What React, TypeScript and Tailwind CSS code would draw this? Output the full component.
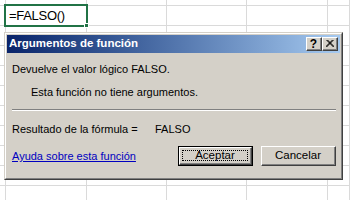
import React from "react";

const cols = ["w-[6px]", "w-[81px]", "w-[80px]", "w-[80px]", "w-[81px]", "flex-1"];

function Sheet() {
  const rows = Array.from({ length: 11 });
  return (
    <div className="flex flex-col w-[350px]">
      {rows.map((_, r) => (
        <div key={r} className={`flex ${r === 0 ? "h-[6px]" : "h-[20px]"}`}>
          {cols.map((c, i) => (
            <div key={i} className={`${c} h-full border-r border-b border-[#dadada]`} />
          ))}
        </div>
      ))}
    </div>
  );
}

function ClassicBtn({ children, def }: { children: React.ReactNode; def?: boolean }) {
  if (def) {
    return (
      <div className="w-[75px] h-[20px] border border-black">
        <div className="w-full h-full border-t border-l border-white border-r border-b border-r-[#404040] border-b-[#404040]">
          <div className="w-full h-full border-r border-b border-[#808080] flex items-center justify-center p-[2px]">
            <div className="w-full h-full border border-dotted border-black flex items-center justify-center text-[11.5px] leading-none text-black">
              {children}
            </div>
          </div>
        </div>
      </div>
    );
  }
  return (
    <div className="w-[75px] h-[20px] border-t border-l border-white border-r border-b border-r-[#404040] border-b-[#404040]">
      <div className="w-full h-full border-r border-b border-[#808080] flex items-center justify-center text-[11.5px] leading-none text-black">
        {children}
      </div>
    </div>
  );
}

function TitleBtn({ children }: { children: React.ReactNode }) {
  return (
    <div className="w-[16px] h-[14px] bg-[#d4d0c8] border-t border-l border-white border-r border-b border-r-[#404040] border-b-[#404040]">
      <div className="w-full h-full border-r border-b border-[#808080] flex items-center justify-center">
        {children}
      </div>
    </div>
  );
}

export default function App() {
  return (
    <div
      className="relative w-[350px] h-[200px] overflow-hidden bg-white"
      style={{ fontFamily: '"Liberation Sans", Arial, sans-serif' }}
    >
      <Sheet />

      {/* selected cell */}
      <div className="absolute left-[4px] top-[4px] w-[84px] h-[23px] border-2 border-[#217346] bg-white flex items-center pl-[3px]">
        <span className="text-[13px] leading-none text-black tracking-[-0.3px]">=FALSO()</span>
      </div>
      <div className="absolute left-[84px] top-[23px] w-[5px] h-[5px] bg-[#217346] border border-white" />

      {/* dialog */}
      <div className="absolute left-[4px] top-[32px] w-[339px] h-[148px] bg-[#d4d0c8] border-t border-l border-[#d4d0c8] border-r border-b border-r-[#404040] border-b-[#404040]">
        <div className="w-full h-full border-t border-l border-white border-r border-b border-r-[#808080] border-b-[#808080] p-[1px] flex flex-col">
          <div className="h-[18px] flex items-center justify-between pl-[2px] pr-[2px] bg-gradient-to-r from-[#0a246a] to-[#a6caf0]">
            <span className="text-white font-bold text-[11.5px] leading-none">Argumentos de función</span>
            <div className="flex">
              <TitleBtn>
                <span className="font-bold text-[12px] leading-none text-black">?</span>
              </TitleBtn>
              <TitleBtn>
                <svg width="8" height="7" viewBox="0 0 8 7">
                  <path d="M0.5 0 L7.5 7 M1.5 0 L8.5 7 M7.5 0 L0.5 7 M6.5 0 L-0.5 7" stroke="black" strokeWidth="1" />
                </svg>
              </TitleBtn>
            </div>
          </div>

          <div className="flex flex-col pl-[5px] pr-[4px] text-[11px] text-black">
            <div className="mt-[9px] leading-[14px]">Devuelve el valor lógico FALSO.</div>
            <div className="mt-[9px] leading-[14px] ml-[19px]">Esta función no tiene argumentos.</div>
            <div className="mt-[10px] h-[2px] border-t border-[#808080] border-b border-b-white" />
            <div className="mt-[11px] leading-[14px] flex">
              <span className="w-[143px]">Resultado de la fórmula =</span>
              <span>FALSO</span>
            </div>
            <div className="mt-[10px] flex items-center">
              <span className="flex-1 text-[#0000c0] underline leading-[14px]">Ayuda sobre esta función</span>
              <div className="flex gap-[8px]">
                <ClassicBtn def>Aceptar</ClassicBtn>
                <ClassicBtn>Cancelar</ClassicBtn>
              </div>
            </div>
          </div>
        </div>
      </div>
    </div>
  );
}
